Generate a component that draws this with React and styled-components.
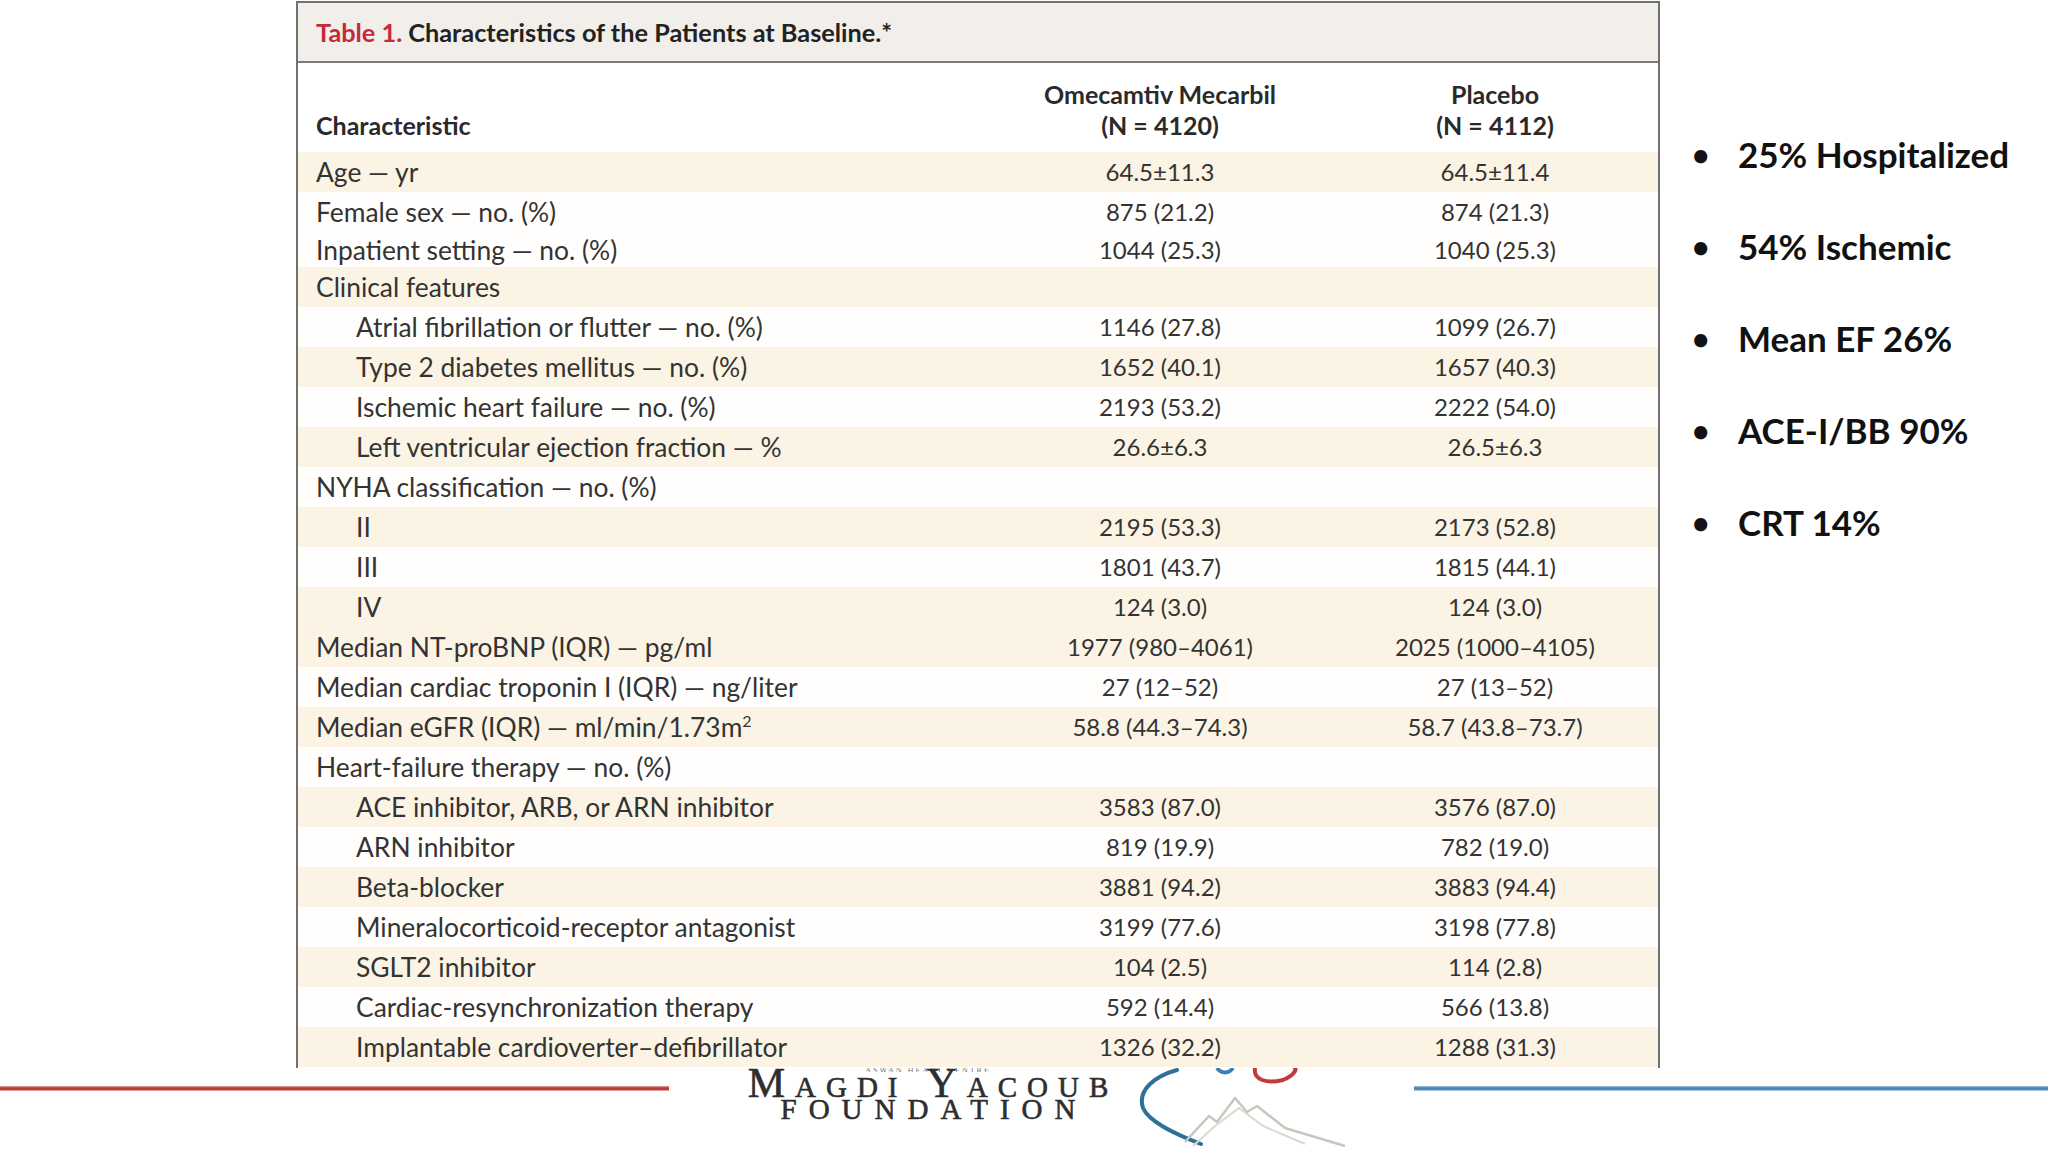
import React from 'react';
import styled, { createGlobalStyle } from 'styled-components';

const Global = createGlobalStyle`
  html, body { margin: 0; padding: 0; background: #fff; }
  body { font-family: Lato, "Liberation Sans", sans-serif; }
  #root { width: 2048px; height: 1152px; }
`;

const Page = styled.div`
  width: 2048px;
  height: 1152px;
  overflow: hidden;
  display: flex;
  flex-direction: column;
  background: #fff;
`;

const Main = styled.div`
  display: flex;
  height: 1068px;
  padding-top: 1px;
  box-sizing: border-box;
  flex: 0 0 auto;
`;

const TablePanel = styled.div`
  margin-left: 296px;
  width: 1364px;
  flex: 0 0 1364px;
  box-sizing: border-box;
  border: 2px solid #707070;
  border-bottom: none;
  display: flex;
  flex-direction: column;
  overflow: hidden;
  color: #333;
`;

const TitleBar = styled.div`
  height: 60px;
  flex: 0 0 60px;
  box-sizing: border-box;
  background: #f2efea;
  border-bottom: 2px solid #7a7a7a;
  display: flex;
  align-items: center;
  padding-left: 18px;
  font-size: 25.3px;
  font-weight: 700;
  color: #222;
`;

const Red = styled.span`
  color: #c42a3c;
  margin-right: 6px;
`;

const Grid = styled.div`
  display: grid;
  grid-template-columns: 690px 344px 326px;
`;

const HeaderRow = styled(Grid)`
  height: 89px;
  flex: 0 0 89px;
  box-sizing: border-box;
  align-items: end;
  padding-bottom: 11px;
  font-size: 25px;
  font-weight: 700;
  line-height: 31px;
  color: #2a2a2a;
`;

const HeadLabel = styled.div`
  padding-left: 18px;
`;

const HeadCol = styled.div`
  text-align: center;
`;

const Row = styled(Grid)`
  height: ${(p) => p.$h || 40}px;
  flex: 0 0 ${(p) => p.$h || 40}px;
  align-items: center;
  background: ${(p) => (p.$cream ? '#fbf4e4' : '#fffefc')};
  line-height: 28px;
`;

const Label = styled.div`
  padding-left: ${(p) => (p.$indent ? 58 : 18)}px;
  white-space: nowrap;
  font-size: 26.4px;
`;

const Value = styled.div`
  text-align: center;
  white-space: nowrap;
  font-size: 24px;
`;

const Sup = styled.sup`
  font-size: 16px;
  vertical-align: 10px;
  line-height: 0;
`;

const Bullets = styled.ul`
  list-style: none;
  margin: 0;
  padding: 107px 0 0 32px;
  display: flex;
  flex-direction: column;
`;

const Bullet = styled.li`
  height: 92px;
  display: flex;
  align-items: center;
  font-size: 35px;
  font-weight: 700;
  color: #111;
  white-space: nowrap;
`;

const Dot = styled.span`
  width: 46px;
  flex: 0 0 46px;
  font-size: 30px;
`;

const Footer = styled.div`
  flex: 1;
  display: flex;
  align-items: flex-start;
`;

const Line = styled.div`
  flex: ${(p) => (p.$grow ? '1 1 auto' : `0 0 ${p.$w}px`)};
  height: 5px;
  margin-top: 18px;
  background: ${(p) =>
    p.$blue
      ? 'linear-gradient(#a9c7dd, #3f7fae 40%, #5a90b8 70%, #c9dbe8)'
      : 'linear-gradient(#e2a9a4, #b6352c 40%, #b8443b 70%, #ecc7c3)'};
`;

const Logo = styled.div`
  flex: 0 0 745px;
  display: flex;
  align-items: flex-start;
  height: 84px;
`;

const LogoText = styled.div`
  margin-left: 72px;
  width: 374px;
  flex: 0 0 374px;
  display: flex;
  flex-direction: column;
  align-items: center;
  font-family: "Liberation Serif", "DejaVu Serif", serif;
  color: #2e2e2e;
`;

const Tiny = styled.div`
  font-size: 8px;
  line-height: 6px;
  height: 4px;
  overflow: hidden;
  letter-spacing: 2px;
  color: #777;
`;

const LogoLine = styled.div`
  font-size: ${(p) => p.$size}px;
  line-height: ${(p) => p.$lh}px;
  letter-spacing: ${(p) => p.$ls}px;
  margin-right: -${(p) => p.$ls}px;
  font-variant: small-caps;
  white-space: nowrap;
  -webkit-text-stroke: 0.6px #2e2e2e;
`;

const HeartSvg = styled.svg`
  margin-left: 20px;
  flex: 0 0 auto;
`;

const rows = [
  { l: 'Age — yr', a: '64.5±11.3', b: '64.5±11.4', c: true },
  { l: 'Female sex — no. (%)', a: '875 (21.2)', b: '874 (21.3)' },
  { l: 'Inpatient setting — no. (%)', a: '1044 (25.3)', b: '1040 (25.3)', h: 35 },
  { l: 'Clinical features', c: true },
  { l: 'Atrial fibrillation or flutter — no. (%)', i: true, a: '1146 (27.8)', b: '1099 (26.7)' },
  { l: 'Type 2 diabetes mellitus — no. (%)', i: true, a: '1652 (40.1)', b: '1657 (40.3)', c: true },
  { l: 'Ischemic heart failure — no. (%)', i: true, a: '2193 (53.2)', b: '2222 (54.0)' },
  { l: 'Left ventricular ejection fraction — %', i: true, a: '26.6±6.3', b: '26.5±6.3', c: true },
  { l: 'NYHA classification — no. (%)' },
  { l: 'II', i: true, a: '2195 (53.3)', b: '2173 (52.8)', c: true },
  { l: 'III', i: true, a: '1801 (43.7)', b: '1815 (44.1)' },
  { l: 'IV', i: true, a: '124 (3.0)', b: '124 (3.0)', c: true },
  { l: 'Median NT-proBNP (IQR) — pg/ml', a: '1977 (980–4061)', b: '2025 (1000–4105)', c: true },
  { l: 'Median cardiac troponin I (IQR) — ng/liter', a: '27 (12–52)', b: '27 (13–52)' },
  { l: 'eGFR', a: '58.8 (44.3–74.3)', b: '58.7 (43.8–73.7)', c: true },
  { l: 'Heart-failure therapy — no. (%)' },
  { l: 'ACE inhibitor, ARB, or ARN inhibitor', i: true, a: '3583 (87.0)', b: '3576 (87.0)', c: true },
  { l: 'ARN inhibitor', i: true, a: '819 (19.9)', b: '782 (19.0)' },
  { l: 'Beta-blocker', i: true, a: '3881 (94.2)', b: '3883 (94.4)', c: true },
  { l: 'Mineralocorticoid-receptor antagonist', i: true, a: '3199 (77.6)', b: '3198 (77.8)' },
  { l: 'SGLT2 inhibitor', i: true, a: '104 (2.5)', b: '114 (2.8)', c: true },
  { l: 'Cardiac-resynchronization therapy', i: true, a: '592 (14.4)', b: '566 (13.8)' },
  { l: 'Implantable cardioverter–defibrillator', i: true, a: '1326 (32.2)', b: '1288 (31.3)', c: true },
];

const bullets = ['25% Hospitalized', '54% Ischemic', 'Mean EF 26%', 'ACE-I/BB 90%', 'CRT 14%'];

function LabelText({ l }) {
  if (l === 'eGFR') {
    return (
      <>
        Median eGFR (IQR) — ml/min/1.73m<Sup>2</Sup>
      </>
    );
  }
  return l;
}

export default function App() {
  return (
    <Page>
      <Global />
      <Main>
        <TablePanel>
          <TitleBar>
            <Red>Table 1.</Red>Characteristics of the Patients at Baseline.*
          </TitleBar>
          <HeaderRow>
            <HeadLabel>Characteristic</HeadLabel>
            <HeadCol>
              Omecamtiv Mecarbil
              <br />
              (N = 4120)
            </HeadCol>
            <HeadCol>
              Placebo
              <br />
              (N = 4112)
            </HeadCol>
          </HeaderRow>
          {rows.map((r, idx) => (
            <Row key={idx} $cream={r.c} $h={r.h}>
              <Label $indent={r.i}>
                <LabelText l={r.l} />
              </Label>
              <Value>{r.a || ''}</Value>
              <Value>{r.b || ''}</Value>
            </Row>
          ))}
        </TablePanel>
        <Bullets>
          {bullets.map((b) => (
            <Bullet key={b}>
              <Dot>•</Dot>
              {b}
            </Bullet>
          ))}
        </Bullets>
      </Main>
      <Footer>
        <Line $w={669} />
        <Logo>
          <LogoText>
            <Tiny>ASWAN HEART CENTRE</Tiny>
            <LogoLine $size={42} $lh={23} $ls={10}>Magdi Yacoub</LogoLine>
            <LogoLine $size={42} $lh={20} $ls={12}>foundation</LogoLine>
          </LogoText>
          <HeartSvg width="230" height="84" viewBox="0 0 230 84">
            <path d="M42 2 C 20 8, 2 22, 8 40 C 14 54, 40 66, 66 76" fill="none" stroke="#2f6f99" strokeWidth="4" strokeLinecap="round" />
            <path d="M120 0 C 118 12, 132 16, 148 12 C 158 8, 162 2, 160 0" fill="none" stroke="#c23a3a" strokeWidth="4" strokeLinecap="round" />
            <path d="M82 0 C 86 6, 94 6, 98 0" fill="none" stroke="#3c7fb0" strokeWidth="4" />
            <path d="M50 74 L 74 48 L 82 54 L 100 30 L 112 44 L 122 38 L 150 60 L 210 78" fill="none" stroke="#c9c6bd" strokeWidth="2.5" strokeLinejoin="round" />
            <path d="M58 78 L 80 58 L 104 40 L 128 58 L 170 76" fill="none" stroke="#dcd8cf" strokeWidth="2" />
          </HeartSvg>
        </Logo>
        <Line $blue $grow />
      </Footer>
    </Page>
  );
}
